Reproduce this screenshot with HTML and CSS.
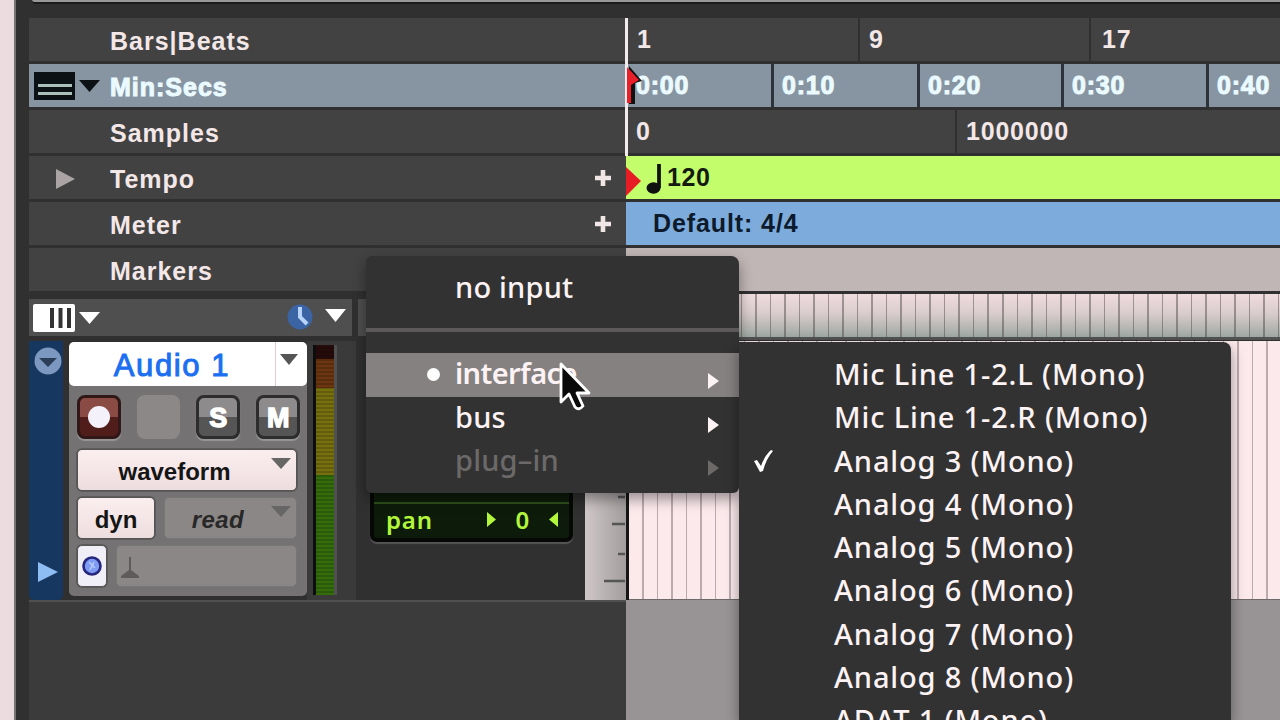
FILE: index.html
```html
<!DOCTYPE html>
<html lang="en">
<head>
    <meta charset="UTF-8">
    <meta name="viewport" content="width=device-width, initial-scale=1.0">
    <title>Edit Window</title>
    <link rel="stylesheet" href="styles.css">
</head>
<body>
    <div class="edit-window">
        <div class="toolbar-edge"></div>

        <!-- Rulers -->
        <div class="rulers">
            <div class="ruler">
                <div class="ruler-label">Bars|Beats</div>
                <div class="ruler-line bars">
                    <span>1</span><span>9</span><span>17</span>
                </div>
            </div>
            <div class="ruler main">
                <div class="ruler-label">
                    <svg class="ruler-icon" width="70" height="30" viewBox="0 0 70 30">
                        <rect x="0" y="1" width="41" height="28" fill="#0c1116"/>
                        <path d="M4 14.5H38M4 22.5H38" stroke="#a9bfb8" stroke-width="3.200"/>
                        <path d="M45 9H66L55.500 21Z" fill="#0c1116"/>
                    </svg>
                    Min:Secs
                </div>
                <div class="ruler-line secs">
                    <span>0:00</span><span>0:10</span><span>0:20</span><span>0:30</span><span>0:40</span>
                </div>
            </div>
            <div class="ruler">
                <div class="ruler-label">Samples</div>
                <div class="ruler-line samples">
                    <span>0</span><span>1000000</span>
                </div>
            </div>
            <div class="ruler">
                <div class="ruler-label">
                    <svg class="expand-icon" width="20" height="20" viewBox="0 0 20 20"><path d="M0 0L19 10L0 20Z" fill="#aaa4a4"/></svg>
                    Tempo
                    <svg class="plus" width="16" height="16" viewBox="0 0 16 16"><path d="M8 0V16M0 8H16" stroke="#f0e6e6" stroke-width="4.600"/></svg>
                </div>
                <div class="ruler-line tempo">
                    <svg width="38" height="43" viewBox="0 0 38 43">
                        <path d="M0 11L15 25L0 40Z" fill="#e81c24"/>
                        <ellipse cx="27.500" cy="32" rx="7" ry="5.800" fill="#111"/>
                        <path d="M33 8V32" stroke="#111" stroke-width="3.800"/>
                    </svg>
                    <b>120</b>
                </div>
            </div>
            <div class="ruler">
                <div class="ruler-label">
                    Meter
                    <svg class="plus" width="16" height="16" viewBox="0 0 16 16"><path d="M8 0V16M0 8H16" stroke="#f0e6e6" stroke-width="4.600"/></svg>
                </div>
                <div class="ruler-line meter-line"><b>Default: 4/4</b></div>
            </div>
            <div class="ruler">
                <div class="ruler-label">Markers</div>
                <div class="ruler-line markers"></div>
            </div>
            <div class="edit-cursor"></div>
            <svg class="playhead" width="16" height="40" viewBox="0 0 16 40">
                <path d="M2 1L15 16L8 18V39H2Z" fill="#111"/>
                <path d="M0 2L12 15L4 20V38H0Z" fill="#e8202a"/>
            </svg>
        </div>

        <!-- Column headers -->
        <div class="columns">
            <div class="track-head">
                <svg width="72" height="30" viewBox="0 0 72 30">
                    <rect x="0" y="1" width="42" height="28" rx="2" fill="#fff"/>
                    <path d="M19 5V25M27.500 5V25M36 5V25" stroke="#333" stroke-width="4"/>
                    <path d="M46 9H67L56.500 21Z" fill="#fff"/>
                </svg>
                <svg width="60" height="30" viewBox="0 0 60 30">
                    <circle cx="13" cy="14" r="12.500" fill="#3b64a4"/>
                    <path d="M13 4V14L20 21" fill="none" stroke="#b9d4fa" stroke-width="4"/>
                    <path d="M38 6H59L48.500 19Z" fill="#fff"/>
                </svg>
            </div>
            <div class="io-head"></div>
            <div class="bar-ruler"></div>
        </div>

        <!-- Audio track -->
        <div class="track">
            <div class="color-strip">
                <svg width="28" height="28" viewBox="0 0 28 28"><circle cx="14" cy="14" r="13.500" fill="#7c98c0"/><path d="M5 11H23L14 20Z" fill="#2c3d58"/></svg>
                <svg width="20" height="22" viewBox="0 0 20 22"><path d="M0 1L20 11L0 21Z" fill="#8dbdf2"/></svg>
            </div>
            <div class="controls">
                <div class="name-plate">
                    <span>Audio 1</span>
                    <svg width="18" height="12" viewBox="0 0 18 12"><path d="M0 0H18L9 11Z" fill="#555"/></svg>
                </div>
                <div class="buttons">
                    <div class="btn rec"><i></i></div>
                    <div class="btn empty"></div>
                    <div class="btn">S</div>
                    <div class="btn">M</div>
                </div>
                <div class="select view">
                    <span>waveform</span>
                    <svg width="20" height="12" viewBox="0 0 20 12"><path d="M0 0H20L10 11Z" fill="#666"/></svg>
                </div>
                <div class="pair">
                    <div class="select dyn">dyn</div>
                    <div class="select auto">
                        <span>read</span>
                        <svg width="20" height="12" viewBox="0 0 20 12"><path d="M0 0H20L10 11Z" fill="#666"/></svg>
                    </div>
                </div>
                <div class="pair last">
                    <div class="select elastic">
                        <svg width="22" height="22" viewBox="0 0 22 22"><circle cx="11" cy="11" r="8.500" fill="#7f9cf5" stroke="#26267e" stroke-width="2.600"/><path d="M8 7L14 13M13 7L9 15" stroke="#b7ccff" stroke-width="1.500"/></svg>
                    </div>
                    <div class="select empty-plug">
                        <svg width="20" height="22" viewBox="0 0 20 22"><path d="M9 0H11V13L19 19V21H1V19L9 13Z" fill="#5e5b5b"/></svg>
                    </div>
                </div>
            </div>
            <div class="level"><div class="level-bar"></div></div>
            <div class="io">
                <div class="pan">
                    <span>pan</span>
                    <svg width="9" height="15" viewBox="0 0 9 15"><path d="M0 0L9 7.500L0 15Z" fill="#b2f73c"/></svg>
                    <span class="pan-value">0</span>
                    <svg width="9" height="15" viewBox="0 0 9 15"><path d="M9 0L0 7.500L9 15Z" fill="#b2f73c"/></svg>
                </div>
            </div>
            <div class="scale">
                <svg width="40" height="115" viewBox="0 0 40 115"><path d="M33 12H40M27 39H40M33 69H40M19 96H40" stroke="#555" stroke-width="2.400"/></svg>
            </div>
            <div class="playlist"></div>
        </div>

        <div class="empty-area"><div class="empty-tracks"></div><div class="empty-line"></div></div>
    </div>

    <!-- Input selector menu -->
    <div class="menu input-menu">
        <div class="item">no input</div>
        <div class="separator"></div>
        <div class="item active"><i class="dot"></i>interface<svg class="arrow" width="11" height="16" viewBox="0 0 11 16"><path d="M0 0L11 8L0 16Z"/></svg></div>
        <div class="item">bus<svg class="arrow" width="11" height="16" viewBox="0 0 11 16"><path d="M0 0L11 8L0 16Z"/></svg></div>
        <div class="item disabled">plug–in<svg class="arrow" width="11" height="16" viewBox="0 0 11 16"><path d="M0 0L11 8L0 16Z"/></svg></div>
    </div>

    <div class="menu sub-menu">
        <div class="item">Mic Line 1-2.L (Mono)</div>
        <div class="item">Mic Line 1-2.R (Mono)</div>
        <div class="item"><svg class="check" width="20" height="24" viewBox="0 0 20 24"><path d="M1 12L4 11L8 17Q12 6 18 1L20 2Q13 10 10 22L7 23Z" fill="#fff"/></svg>Analog 3 (Mono)</div>
        <div class="item">Analog 4 (Mono)</div>
        <div class="item">Analog 5 (Mono)</div>
        <div class="item">Analog 6 (Mono)</div>
        <div class="item">Analog 7 (Mono)</div>
        <div class="item">Analog 8 (Mono)</div>
        <div class="item">ADAT 1 (Mono)</div>
    </div>

    <svg class="pointer" width="34" height="50" viewBox="0 0 34 50">
        <path d="M2 2V40L10 32L16 45Q20 49 24 44L18 31H30Z" fill="#0a0a0a" stroke="#fff" stroke-width="2.800" stroke-linejoin="round"/>
    </svg>
</body>
</html>
```
FILE: styles.css
```css
* {
    box-sizing: border-box;
}

body {
    margin: 0;
    width: 1280px;
    height: 720px;
    overflow: hidden;
    position: relative;
    background: #ecdcdf;
    font-family: "Liberation Sans", Arial, sans-serif;
    font-weight: bold;
}

svg {
    display: block;
    flex: none;
}

.edit-window {
    height: 720px;
    margin-left: 14px;
    padding-left: 13px;
    border-left: 2px solid #777475;
    background: #303030;
    display: flex;
    flex-direction: column;
}

.toolbar-edge {
    height: 4px;
    margin: 0 0 14px 3px;
    background: #999;
    border-bottom: 2px solid #1b1b1b;
    border-bottom-left-radius: 5px;
    flex: none;
}

/* Rulers */
.rulers {
    position: relative;
    flex: none;
}

.ruler {
    display: flex;
    height: 43px;
    margin-bottom: 3px;
    background: #424242;
    color: #f3e7e8;
    font-size: 25px;
    line-height: 47px;
}

.ruler.main {
    background: #8795a2;
    color: #eafaff;
}

.ruler.main .ruler-label {
    -webkit-text-stroke: 1px #eafaff;
    letter-spacing: 1px;
}

.ruler-label {
    position: relative;
    width: 597px;
    padding-left: 81px;
    letter-spacing: 1px;
    flex: none;
}

.ruler-icon {
    position: absolute;
    left: 5px;
    top: 7px;
}

.expand-icon {
    position: absolute;
    left: 27px;
    top: 13px;
}

.plus {
    position: absolute;
    right: 15px;
    top: 14px;
}

.ruler-line {
    flex: 1;
    display: flex;
    overflow: hidden;
    line-height: 42px;
}

.ruler-line span {
    flex: none;
    border-right: 3px solid #303030;
    padding-left: 9px;
    letter-spacing: 0.8px;
}

.ruler-line span:last-child {
    border: none;
}

.bars span {
    width: 234px;
    padding-left: 11px;
    border-right-width: 2px;
}

.bars span:nth-child(2) {
    width: 231px;
    padding-left: 9px;
}

.secs span {
    width: 146px;
    padding-left: 8px;
    border-right-color: #2c333a;
    -webkit-text-stroke: 1px #eafaff;
    letter-spacing: 0.8px;
}

.secs span:first-child {
    width: 148px;
    padding-left: 10px;
}

.secs span:nth-child(3) {
    width: 144px;
}

.secs span:nth-child(4) {
    width: 145px;
}

.samples span:first-child {
    width: 331px;
    padding-left: 10px;
    border-right-width: 2px;
}

.tempo {
    background: #c3fd6c;
    color: #141a10;
}

.tempo b {
    margin-left: 3px;
    letter-spacing: 0.6px;
}

.meter-line {
    background: #7dabdb;
    color: #0c1a2c;
    padding-left: 27px;
    line-height: 42px;
    letter-spacing: 0.9px;
}

.markers {
    background: #c1b6b6;
}

.edit-cursor {
    position: absolute;
    left: 596px;
    top: 0;
    width: 3px;
    height: 138px;
    background: #f3eaee;
}

.playhead {
    position: absolute;
    left: 598px;
    top: 47px;
}

/* Column headers */
.columns {
    display: flex;
    height: 47px;
    flex: none;
}

.track-head {
    width: 323px;
    height: 37px;
    margin: 5px 6px 0 0;
    padding: 0 5px 0 4px;
    background: #4f4f4f;
    display: flex;
    align-items: center;
    justify-content: space-between;
}

.io-head {
    width: 268px;
    height: 37px;
    margin-top: 5px;
    background: #4f4f4f;
}

.bar-ruler {
    flex: 1;
    margin-bottom: 1px;
    border-bottom: 3px solid #525252;
    background:
        repeating-linear-gradient(90deg, transparent 0 13px, rgba(70, 65, 65, 0.45) 13px 14.52px),
        linear-gradient(#f0dcdf, #d9cccd 45%, #9ea8a2);
}

/* Track */
.track {
    display: flex;
    height: 259px;
    flex: none;
}

.color-strip {
    width: 34px;
    margin-right: 6px;
    padding: 6px 0 17px 3px;
    background: #16375f;
    border-radius: 0 0 5px 5px;
    display: flex;
    flex-direction: column;
    align-items: center;
    justify-content: space-between;
}

.controls {
    width: 238px;
    height: 254px;
    background: #747272;
    border-radius: 5px;
    display: flex;
    flex-direction: column;
    margin-top: 1px;
}

.name-plate {
    height: 44px;
    background: #fff;
    border-radius: 5px;
    display: flex;
    align-items: center;
    flex: none;
}

.name-plate span {
    width: 207px;
    height: 44px;
    line-height: 47px;
    text-align: center;
    border-right: 1px solid #ecc9cf;
    color: #1c6ff0;
    font-size: 31px;
    font-weight: normal;
    -webkit-text-stroke: 1px #1c6ff0;
    letter-spacing: 1.6px;
}

.name-plate svg {
    margin: -9px 0 0 4px;
}

.buttons {
    display: flex;
    gap: 16px;
    padding: 9px 7px 0 8px;
    height: 62px;
    flex: none;
}

.btn {
    width: 44px;
    height: 44px;
    border: 3px solid #2d2d2d;
    border-radius: 8px;
    background: linear-gradient(#8d8b8b 50%, #555 50%);
    box-shadow: 0 2px 1px #9a9797;
    color: #fff;
    font-size: 27px;
    line-height: 40px;
    text-align: center;
    -webkit-text-stroke: 1.4px #fff;
}

.btn.rec {
    border-color: #301818;
    background: linear-gradient(#8a4b45 50%, #511d1a 50%);
    display: flex;
    align-items: center;
    justify-content: center;
}

.rec i {
    width: 22px;
    height: 22px;
    border-radius: 50%;
    background: #f4f1fa;
}

.btn.empty {
    border: none;
    background: #8c8888;
    box-shadow: none;
}

.select {
    height: 42px;
    border: 1px solid #555;
    border-radius: 5px;
    box-shadow: 0 0 0 1px #5c5a5a;
    background: linear-gradient(#fbeeee, #eedddf);
    color: #151515;
    font-size: 24px;
    line-height: 43px;
    text-align: center;
    display: flex;
    flex: none;
}

.view {
    margin: 1px 10px 0 8px;
}

.view span {
    width: 193px;
}

.select svg {
    margin-top: 8px;
}

.pair {
    display: flex;
    gap: 9px;
    margin: 6px 10px 0 8px;
}

.dyn {
    width: 78px;
    justify-content: center;
}

.auto,
.empty-plug {
    flex: 1;
    background: #8b8786;
    border-color: #777;
    box-shadow: none;
}

.auto span {
    width: 106px;
    font-style: italic;
    color: #292828;
    letter-spacing: 0.4px;
}

.elastic {
    width: 30px;
    justify-content: center;
    background: #f0eef6;
}

.elastic svg {
    margin-top: 9px;
}

.empty-plug svg {
    margin: 11px 0 0 3px;
}

.level {
    width: 52px;
    padding: 4px 0 4px 6px;
    background: #3a3a3a;
    border-right: 3px solid #303030;
}

.level-bar {
    width: 24px;
    height: 250px;
    border-left: 3px solid #0d0d0d;
    border-right: 3px solid #505050;
    background:
        repeating-linear-gradient(transparent 0 2px, rgba(0, 0, 0, 0.18) 2px 4px),
        linear-gradient(#260b0b 14px, #6b3610 14px 43px, #77700e 43px 130px, #356d0c 130px);
}

.io {
    width: 226px;
    padding: 0 0 0 11px;
    background: #303030;
    display: flex;
    flex-direction: column;
    justify-content: flex-end;
}

.pan {
    width: 203px;
    height: 56px;
    margin-bottom: 58px;
    padding: 10px 11px 0 12px;
    border: 4px solid #050805;
    border-radius: 7px;
    box-shadow: 0 2px 1px #555;
    background: linear-gradient(transparent 12px, #2e501b 12px 14px, transparent 14px), #0d1c0a;
    color: #b2f73c;
    font-family: "Noto Sans", sans-serif;
    font-size: 24px;
    font-weight: 600;
    display: flex;
    align-items: center;
}

.pan span:first-child {
    width: 102px;
    letter-spacing: 0.8px;
}

.pan-value {
    width: 54px;
    text-align: center;
}

.scale {
    width: 44px;
    border-right: 3px solid #151515;
    background: linear-gradient(90deg, #cfc7c8, #a39d9e);
    display: flex;
    align-items: flex-end;
}

.playlist {
    flex: 1;
    border-bottom: 1px solid #6e6a6b;
    background:
        repeating-linear-gradient(90deg, transparent 0 13px, rgba(110, 95, 98, 0.45) 13px 14.52px),
        #fbe9ec;
}

.empty-area {
    flex: 1;
    display: flex;
}

.empty-tracks {
    width: 597px;
    border-top: 2px solid #505050;
    background: #3b3b3b;
}

.empty-line {
    flex: 1;
    background: #989495;
}

/* Popup menus */
.menu {
    position: absolute;
    background: #323232;
    color: #fdf3f4;
    font-family: "Noto Sans", sans-serif;
    font-size: 29px;
    font-weight: 500;
    letter-spacing: 0.85px;
    box-shadow: 0 6px 14px rgba(0, 0, 0, 0.4);
}

.item {
    position: relative;
    height: 43.3px;
    line-height: 40px;
    white-space: nowrap;
}

.input-menu {
    left: 366px;
    top: 256px;
    width: 373px;
    height: 237px;
    padding-top: 11px;
    border-radius: 6px 8px 6px 6px;
    letter-spacing: 0.2px;
}

.input-menu .item {
    padding-left: 89px;
}

.separator {
    height: 4px;
    margin: 18px 0 21px;
    background: #5b5959;
}

.item.active {
    background: #858181;
    font-weight: 600;
    letter-spacing: -0.6px;
}

.item.disabled {
    color: #6c6969;
}

.dot {
    position: absolute;
    left: 61px;
    top: 15px;
    width: 13px;
    height: 13px;
    border-radius: 50%;
    background: #fff;
}

.arrow {
    position: absolute;
    right: 20px;
    top: 20px;
    fill: currentColor;
}

.sub-menu {
    left: 739px;
    top: 342px;
    width: 492px;
    height: 378px;
    padding-top: 12px;
    border-radius: 0 8px 0 0;
    overflow: hidden;
}

.sub-menu .item {
    padding-left: 95px;
}

.check {
    position: absolute;
    left: 14px;
    top: 8px;
}

.pointer {
    position: absolute;
    left: 559px;
    top: 362px;
}
```
